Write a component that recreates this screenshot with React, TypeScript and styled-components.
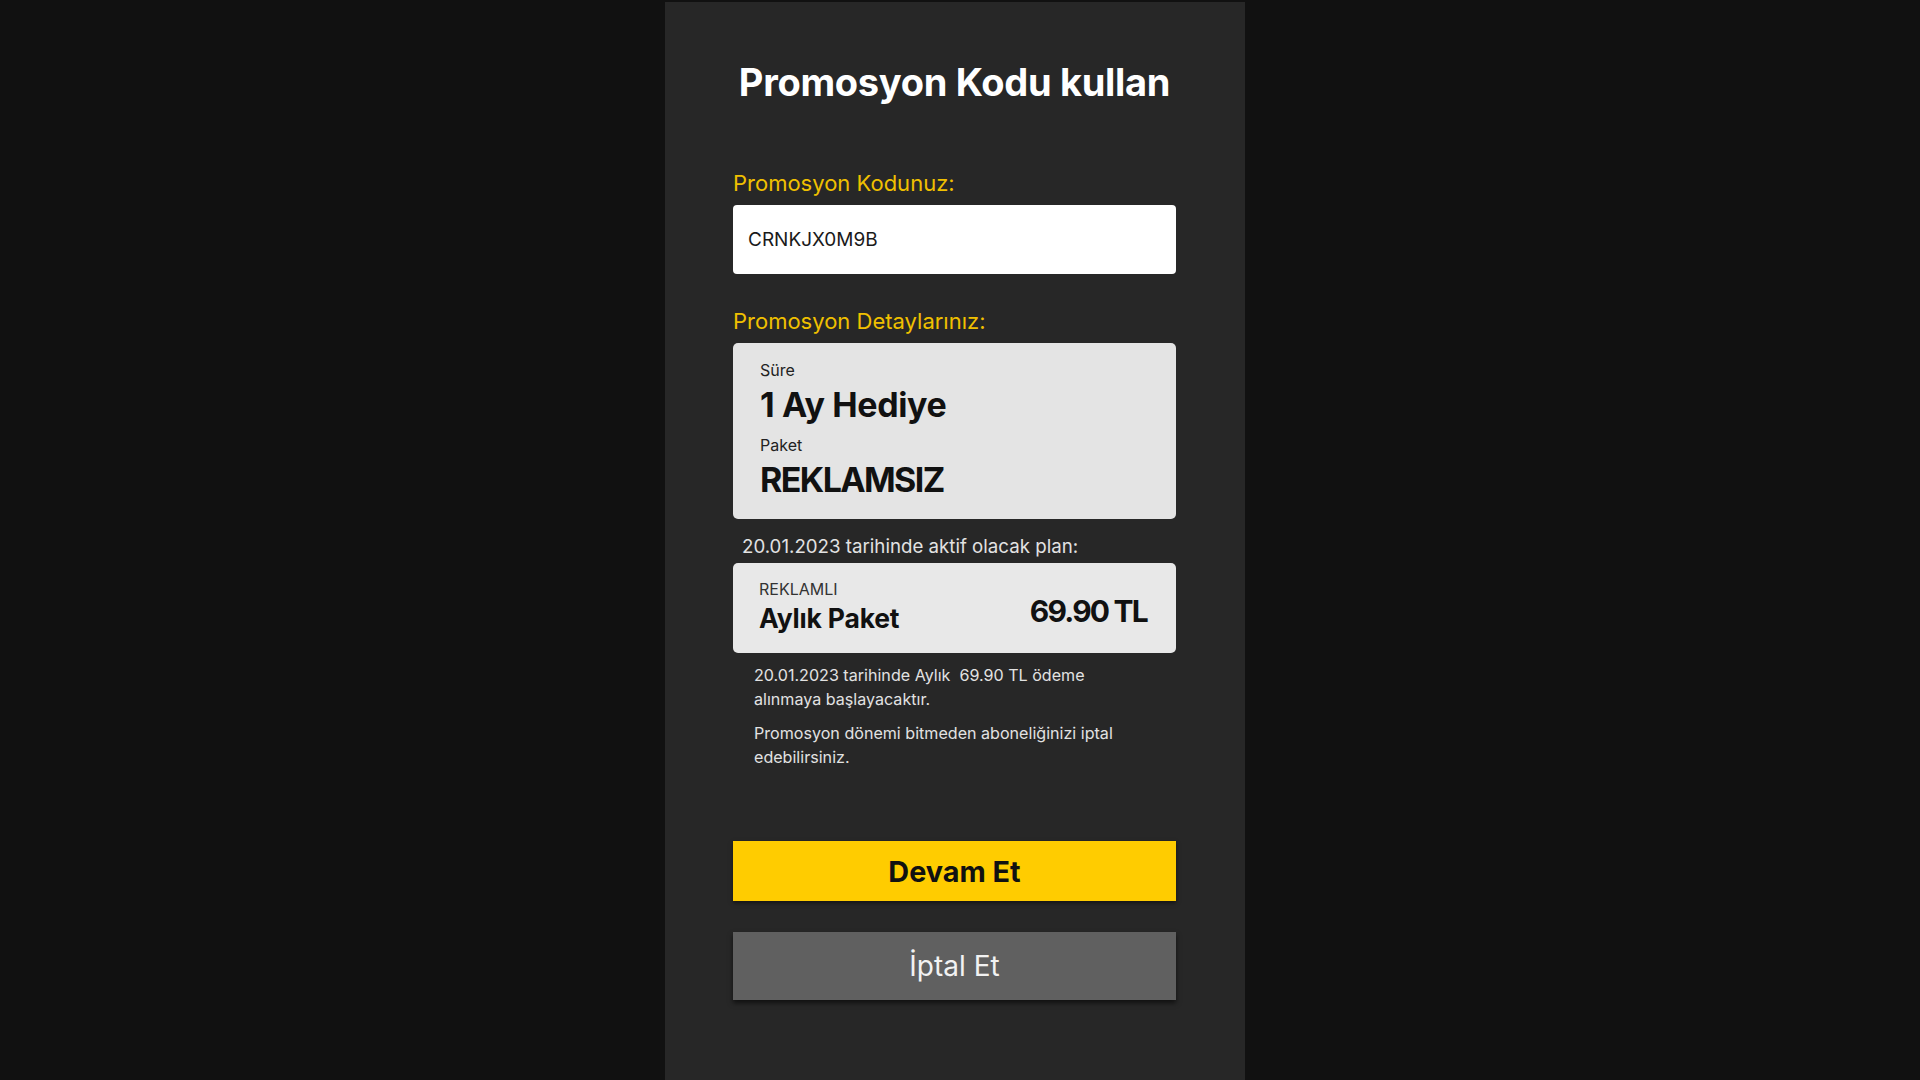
import styled, { createGlobalStyle } from "styled-components";

const GlobalStyle = createGlobalStyle`
    html, body {
        margin: 0;
        padding: 0;
        background: #111111;
        font-family: 'Inter', 'Noto Sans', sans-serif;
    }
    * {
        box-sizing: border-box;
    }
`

interface PlanInfo {
    tag: string;
    name: string;
    price: string;
}

const plan: PlanInfo = { tag: 'REKLAMLI', name: 'Aylık Paket', price: '69.90 TL' };

function App() {
    return (
        <>
            <GlobalStyle />
            <Page>
                <Panel>
                    <Title>Promosyon Kodu kullan</Title>

                    <FieldLabel top={64}>Promosyon Kodunuz:</FieldLabel>
                    <CodeInput readOnly value="CRNKJX0M9B" />

                    <FieldLabel top={33}>Promosyon Detaylarınız:</FieldLabel>
                    <DetailCard>
                        <DetailCaption>Süre</DetailCaption>
                        <DetailValue spacing={-0.4}>1 Ay Hediye</DetailValue>
                        <DetailCaption gap={11}>Paket</DetailCaption>
                        <DetailValue spacing={-1.6}>REKLAMSIZ</DetailValue>
                    </DetailCard>

                    <PlanHeading>20.01.2023 tarihinde aktif olacak plan:</PlanHeading>
                    <PlanCard>
                        <PlanNames>
                            <PlanTag>{plan.tag}</PlanTag>
                            <PlanName>{plan.name}</PlanName>
                        </PlanNames>
                        <PlanPrice>{plan.price}</PlanPrice>
                    </PlanCard>

                    <Note>20.01.2023 tarihinde Aylık  69.90 TL ödeme<br />alınmaya başlayacaktır.</Note>
                    <Note>Promosyon dönemi bitmeden aboneliğinizi iptal<br />edebilirsiniz.</Note>

                    <Actions>
                        <PrimaryButton>Devam Et</PrimaryButton>
                        <SecondaryButton>İptal Et</SecondaryButton>
                    </Actions>
                </Panel>
            </Page>
        </>
    )
}

const Page = styled.div`
    width: 100%;
    height: 1080px;
    display: flex;
    justify-content: center;
    padding-top: 2px;
    background: #111111;
    overflow: hidden;
`
const Panel = styled.div`
    width: 580px;
    height: 100%;
    margin-right: 10px;
    background: #272727;
    padding: 57px 69px 0 68px;
    display: flex;
    flex-direction: column;
`
const Title = styled.h1`
    margin: 0;
    text-align: center;
    font-size: 38px;
    line-height: 46px;
    font-weight: 700;
    color: #ffffff;
    letter-spacing: -0.3px;
`
interface IFieldLabel {
    top: number;
}
const FieldLabel = styled.p<IFieldLabel>`
    margin: ${props => props.top}px 0 8px 0;
    font-size: 22px;
    line-height: 28px;
    color: #f0c000;
`
const CodeInput = styled.input`
    width: 100%;
    height: 69px;
    border: none;
    outline: none;
    border-radius: 4px;
    background: #ffffff;
    padding: 0 15px;
    font-family: 'Inter', sans-serif;
    font-size: 19px;
    color: #1a1a1a;
`
const DetailCard = styled.div`
    background: #e4e4e4;
    border-radius: 5px;
    padding: 17px 27px 20px 27px;
    display: flex;
    flex-direction: column;
`
interface IDetailCaption {
    gap?: number;
}
const DetailCaption = styled.span<IDetailCaption>`
    margin-top: ${props => props.gap || 0}px;
    font-size: 16px;
    line-height: 20px;
    color: #222222;
`
interface IDetailValue {
    spacing: number;
}
const DetailValue = styled.span<IDetailValue>`
    margin-top: 6px;
    font-size: 34px;
    line-height: 38px;
    font-weight: 700;
    color: #111111;
    letter-spacing: ${props => props.spacing}px;
`
const PlanHeading = styled.p`
    margin: 16px 0 4px 9px;
    font-size: 18.7px;
    line-height: 24px;
    color: #e2e2e2;
`
const PlanCard = styled.div`
    background: #e8e8e8;
    border-radius: 5px;
    height: 90px;
    padding: 17px 29px 0 26px;
    display: flex;
    justify-content: space-between;
    align-items: flex-start;
`
const PlanNames = styled.div`
    display: flex;
    flex-direction: column;
`
const PlanTag = styled.span`
    font-size: 16px;
    line-height: 19px;
    color: #333333;
`
const PlanName = styled.span`
    margin-top: 4px;
    font-size: 26.5px;
    line-height: 31px;
    font-weight: 700;
    color: #111111;
    letter-spacing: -0.2px;
`
const PlanPrice = styled.span`
    margin-top: 13px;
    font-size: 30px;
    line-height: 36px;
    font-weight: 700;
    color: #111111;
    letter-spacing: -1.8px;
`
const Note = styled.p`
    margin: 10px 0 0 21px;
    font-size: 16.1px;
    line-height: 24px;
    color: #e2e2e2;
    white-space: pre-wrap;
`
const Actions = styled.div`
    margin-top: 72px;
    display: flex;
    flex-direction: column;
    gap: 31px;
`
const PrimaryButton = styled.button`
    height: 60px;
    border: none;
    background: #ffcc00;
    font-family: 'Inter', sans-serif;
    font-size: 28.8px;
    font-weight: 700;
    color: #111111;
    box-shadow: 0 2px 4px rgba(0, 0, 0, 0.5);
    cursor: pointer;
`
const SecondaryButton = styled.button`
    height: 68px;
    border: none;
    background: #606060;
    font-family: 'Inter', sans-serif;
    font-size: 28px;
    font-weight: 400;
    color: #f2f2f2;
    box-shadow: 0 3px 5px rgba(0, 0, 0, 0.6);
    cursor: pointer;
`

export default App;
